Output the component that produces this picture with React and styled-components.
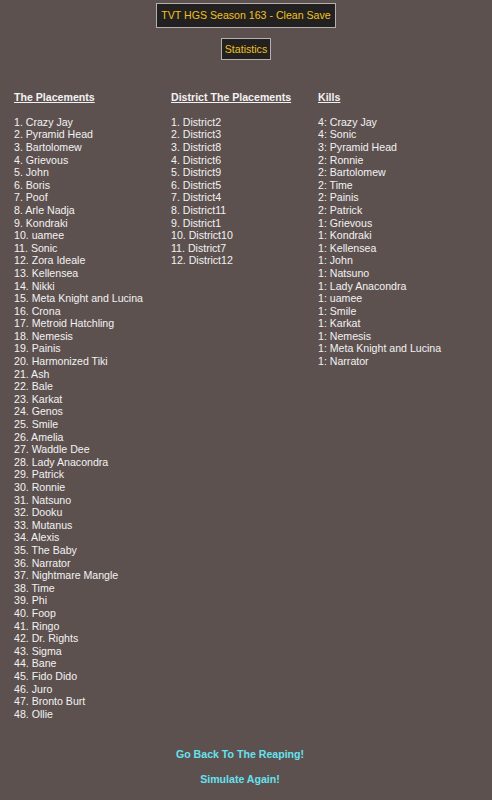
import React from "react";
import styled, { createGlobalStyle } from "styled-components";

const placements = [
  "Crazy Jay", "Pyramid Head", "Bartolomew", "Grievous", "John", "Boris",
  "Poof", "Arle Nadja", "Kondraki", "uamee", "Sonic", "Zora Ideale",
  "Kellensea", "Nikki", "Meta Knight and Lucina", "Crona", "Metroid Hatchling",
  "Nemesis", "Painis", "Harmonized Tiki", "Ash", "Bale", "Karkat", "Genos",
  "Smile", "Amelia", "Waddle Dee", "Lady Anacondra", "Patrick", "Ronnie",
  "Natsuno", "Dooku", "Mutanus", "Alexis", "The Baby", "Narrator",
  "Nightmare Mangle", "Time", "Phi", "Foop", "Ringo", "Dr. Rights", "Sigma",
  "Bane", "Fido Dido", "Juro", "Bronto Burt", "Ollie"
];

const districts = [
  "District2", "District3", "District8", "District6", "District9", "District5",
  "District4", "District11", "District1", "District10", "District7", "District12"
];

const kills = [
  [4, "Crazy Jay"], [4, "Sonic"], [3, "Pyramid Head"], [2, "Ronnie"],
  [2, "Bartolomew"], [2, "Time"], [2, "Painis"], [2, "Patrick"],
  [1, "Grievous"], [1, "Kondraki"], [1, "Kellensea"], [1, "John"],
  [1, "Natsuno"], [1, "Lady Anacondra"], [1, "uamee"], [1, "Smile"],
  [1, "Karkat"], [1, "Nemesis"], [1, "Meta Knight and Lucina"], [1, "Narrator"]
];

const GlobalStyle = createGlobalStyle`
  html, body {
    margin: 0;
    background: #5d5150;
  }
  body {
    font-family: "Liberation Sans", Arial, sans-serif;
    font-size: 10.6px;
    line-height: 12.6px;
    color: #f2f2f2;
  }
`;

const Page = styled.div`
  min-height: 800px;
  padding-top: 3px;
  box-sizing: border-box;
`;

const Header = styled.div`
  display: flex;
  flex-direction: column;
  align-items: center;
  gap: 10px;
`;

const Badge = styled.div`
  background: #222020;
  border: 1px solid #b4b0ae;
  color: #f0c020;
  padding: ${props => (props.small ? "4px 3px" : "5px 4px")};
  white-space: nowrap;
`;

const Columns = styled.div`
  display: grid;
  grid-template-columns: 157px 147px auto;
  padding-left: 14px;
  margin-top: 31px;
`;

const Column = styled.div`
  display: flex;
  flex-direction: column;
`;

const Heading = styled.div`
  font-weight: bold;
  text-decoration: underline;
  margin-bottom: 12px;
  height: 12.6px;
`;

const Entry = styled.div`
  white-space: nowrap;
`;

const Footer = styled.div`
  display: flex;
  flex-direction: column;
  align-items: center;
  gap: 12.4px;
  margin-top: 28px;
  padding-right: 12px;
`;

const FooterLink = styled.a`
  color: #66e2ee;
  font-weight: bold;
  text-decoration: none;
  cursor: pointer;
`;

const App = () => {
  return (
    <Page>
      <GlobalStyle />
      <Header>
        <Badge>TVT HGS Season 163 - Clean Save</Badge>
        <Badge small>Statistics</Badge>
      </Header>
      <Columns>
        <Column>
          <Heading>The Placements</Heading>
          {placements.map((name, i) => (
            <Entry key={i}>
              {i + 1}. {name}
            </Entry>
          ))}
        </Column>
        <Column>
          <Heading>District The Placements</Heading>
          {districts.map((name, i) => (
            <Entry key={i}>
              {i + 1}. {name}
            </Entry>
          ))}
        </Column>
        <Column>
          <Heading>Kills</Heading>
          {kills.map(([count, name], i) => (
            <Entry key={i}>
              {count}: {name}
            </Entry>
          ))}
        </Column>
      </Columns>
      <Footer>
        <FooterLink>Go Back To The Reaping!</FooterLink>
        <FooterLink>Simulate Again!</FooterLink>
      </Footer>
    </Page>
  );
};

export default App;
